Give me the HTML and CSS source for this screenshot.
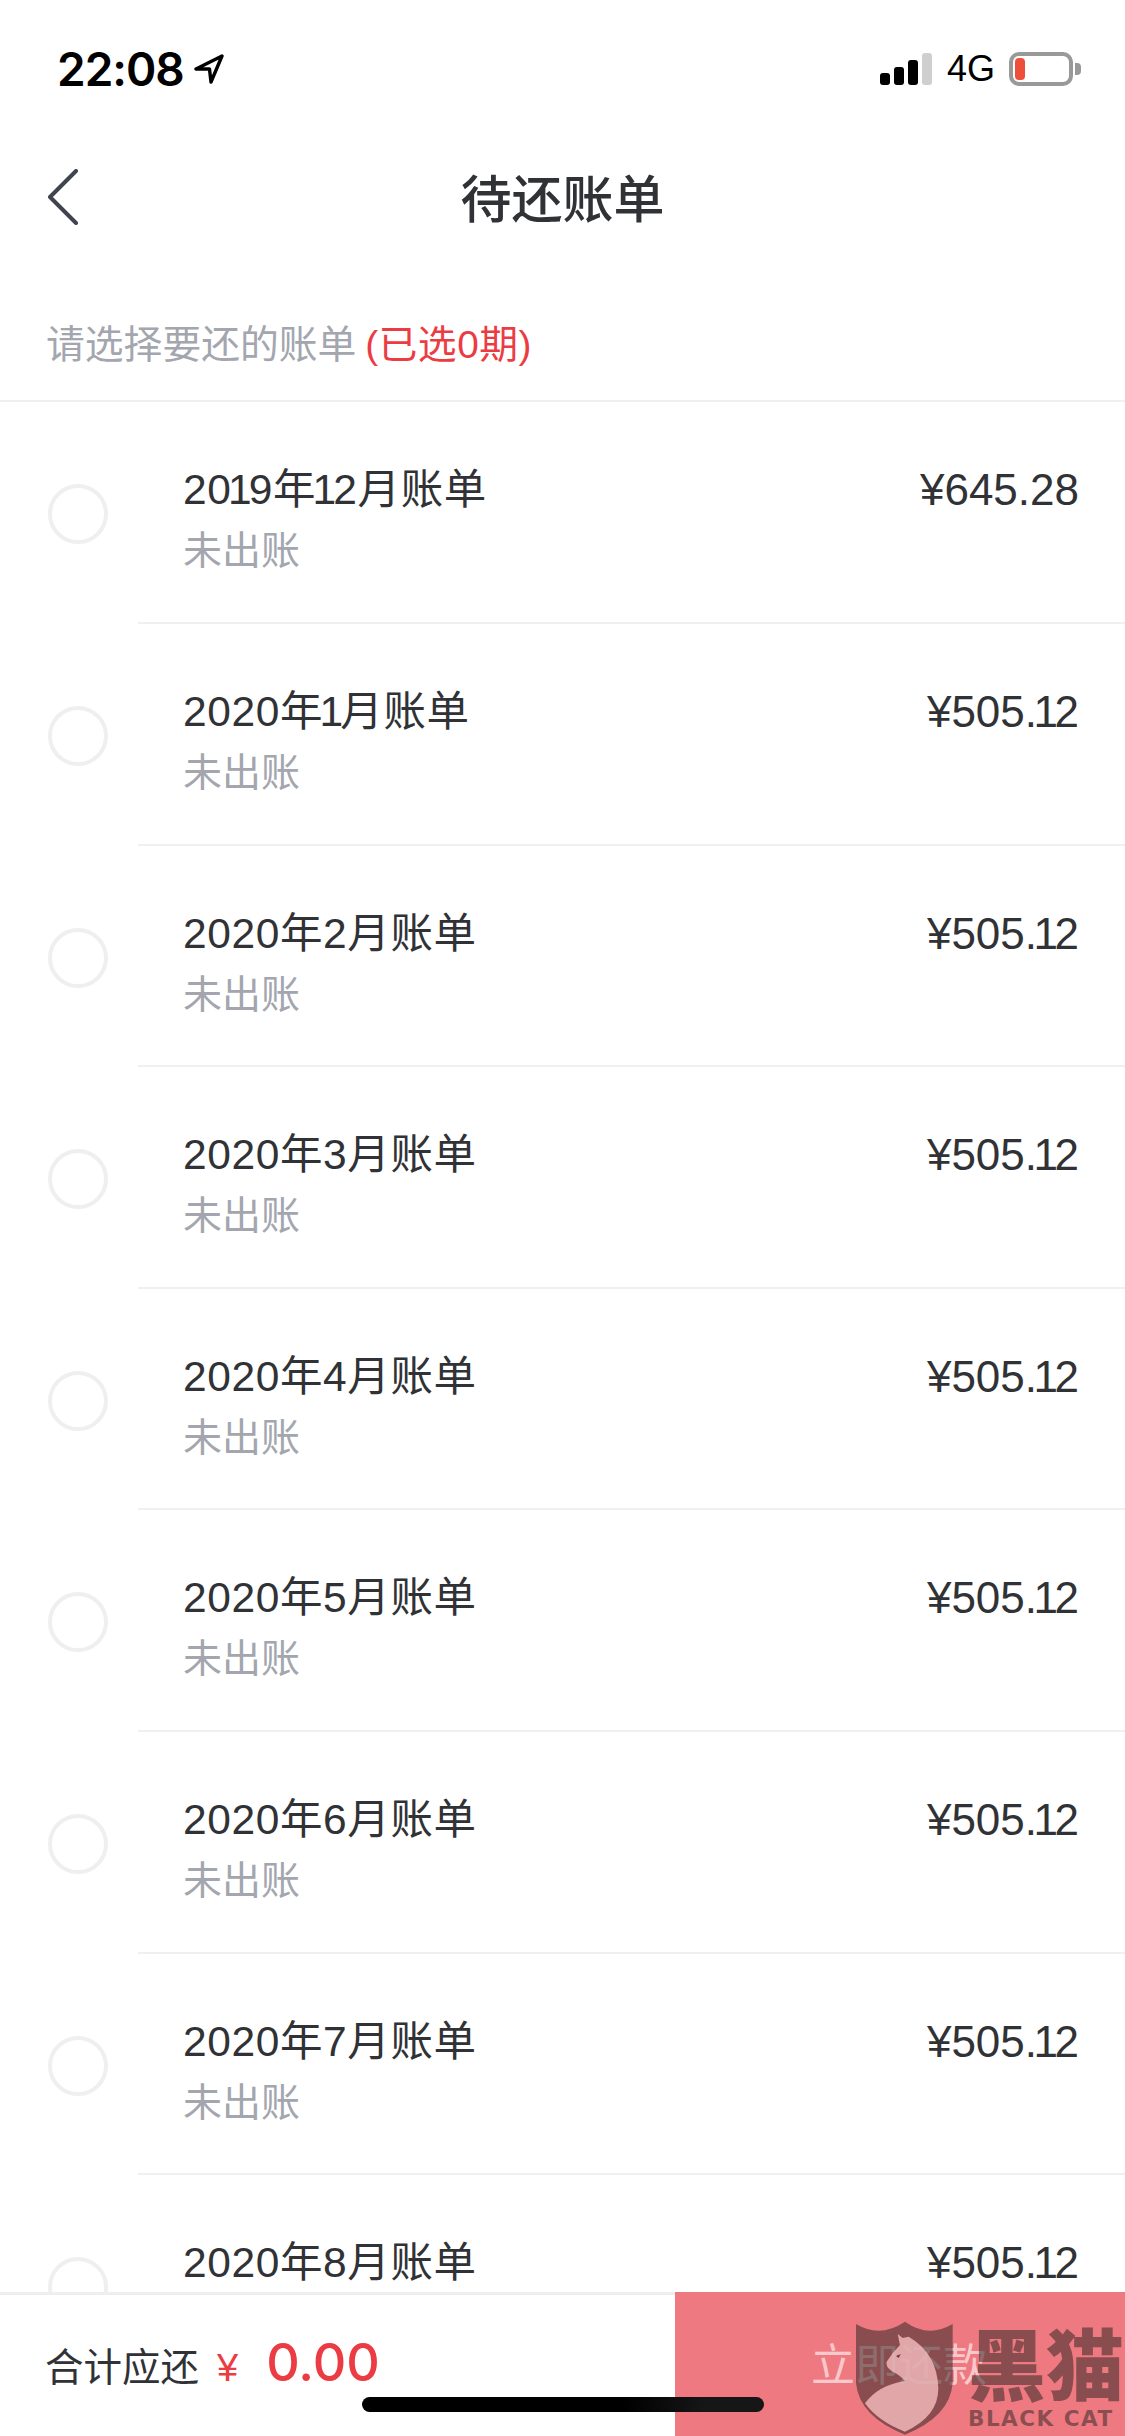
FILE: index.html
```html
<!DOCTYPE html>
<html lang="zh-CN">

<head>
  <meta charset="utf-8">
  <title>待还账单</title>
  <link rel="stylesheet" href="styles.css">
</head>

<body>
  <div class="page">
    <div class="status">
      <div class="status-left">
        <span class="time">22:08</span>
        <svg class="arrow" width="30" height="30" viewBox="0 0 30 30">
          <path d="M28 2 L2 15 L15.5 15 L17 28 Z" fill="none" stroke="#000" stroke-width="3.4" stroke-linejoin="round"/>
        </svg>
      </div>
      <div class="status-right">
        <div class="signal">
          <i class="bar b1"></i><i class="bar b2"></i><i class="bar b3"></i><i class="bar b4"></i>
        </div>
        <span class="net">4G</span>
        <div class="battery"><div class="level"></div></div>
        <div class="tip"></div>
      </div>
    </div>

    <div class="nav">
      <svg class="back" width="32" height="56" viewBox="0 0 32 56">
        <path d="M29 2 L3 28 L29 54" fill="none" stroke="#3f4450" stroke-width="4" stroke-linecap="round" stroke-linejoin="round"/>
      </svg>
      <h1 class="title">待还账单</h1>
      <span></span>
    </div>

    <div class="tips">请选择要还的账单 <span class="red">(已选0期)</span></div>

    <div class="list">
      <div class="row">
        <div class="radio"></div>
        <div class="info"><div class="name">20<span class="one">1</span>9年<span class="one">1</span>2月账单</div><div class="state">未出账</div></div>
        <div class="amount">¥645.28</div>
      </div>
      <div class="row">
        <div class="radio"></div>
        <div class="info"><div class="name">2020年<span class="one">1</span>月账单</div><div class="state">未出账</div></div>
        <div class="amount">¥505.<span class="one">1</span>2</div>
      </div>
      <div class="row">
        <div class="radio"></div>
        <div class="info"><div class="name">2020年2月账单</div><div class="state">未出账</div></div>
        <div class="amount">¥505.<span class="one">1</span>2</div>
      </div>
      <div class="row">
        <div class="radio"></div>
        <div class="info"><div class="name">2020年3月账单</div><div class="state">未出账</div></div>
        <div class="amount">¥505.<span class="one">1</span>2</div>
      </div>
      <div class="row">
        <div class="radio"></div>
        <div class="info"><div class="name">2020年4月账单</div><div class="state">未出账</div></div>
        <div class="amount">¥505.<span class="one">1</span>2</div>
      </div>
      <div class="row">
        <div class="radio"></div>
        <div class="info"><div class="name">2020年5月账单</div><div class="state">未出账</div></div>
        <div class="amount">¥505.<span class="one">1</span>2</div>
      </div>
      <div class="row">
        <div class="radio"></div>
        <div class="info"><div class="name">2020年6月账单</div><div class="state">未出账</div></div>
        <div class="amount">¥505.<span class="one">1</span>2</div>
      </div>
      <div class="row">
        <div class="radio"></div>
        <div class="info"><div class="name">2020年7月账单</div><div class="state">未出账</div></div>
        <div class="amount">¥505.<span class="one">1</span>2</div>
      </div>
      <div class="row">
        <div class="radio"></div>
        <div class="info"><div class="name">2020年8月账单</div></div>
        <div class="amount">¥505.<span class="one">1</span>2</div>
      </div>
    </div>

    <div class="footer">
      <div class="total">
        <span class="total-label">合计应还</span>
        <span class="yen">¥</span>
        <span class="sum">0.00</span>
      </div>
      <div class="pay">立即还款</div>
    </div>

    <div class="mark">
      <svg class="shield" width="110" height="126" viewBox="0 0 330 378">
        <path d="M18 42 Q90 85 165 35 Q235 85 308 42 L308 220 Q300 320 165 374 Q28 320 18 220 Z" fill="#463030" fill-opacity="0.6"/>
        <path d="M143 72 L158 84 L176 80 Q262 130 265 235 Q265 320 165 365 Q85 335 45 280 Q85 225 165 213 Q150 195 128 185 Q105 170 110 155 Q125 130 150 105 Z" fill="#f8bfc1" fill-opacity="0.78"/>
        <path d="M138 138 L152 132 L146 144 Z" fill="#6b3c40"/>
      </svg>
      <div class="mark-text">
        <div class="mark-cn">黑猫</div>
        <div class="mark-en">BLACK CAT</div>
      </div>
    </div>

    <div class="home"></div>
  </div>
</body>

</html>
```

FILE: styles.css
```css
* {
  box-sizing: border-box;
}

html, body {
  margin: 0;
  background: #fff;
}

body {
  font-family: "Liberation Sans", "Noto Sans CJK SC", sans-serif;
  color: #303236;
}

.page {
  position: relative;
  width: 1125px;
  height: 2436px;
  display: flex;
  flex-direction: column;
  overflow: hidden;
}

/* status bar */
.status {
  height: 130px;
  flex: none;
  padding: 8px 44px 0 57px;
  display: flex;
  justify-content: space-between;
  align-items: center;
  color: #000;
}

.status-left, .status-right {
  display: flex;
  align-items: center;
}

.time {
  font-family: Inter, sans-serif;
  font-weight: 600;
  font-size: 46px;
  letter-spacing: -1px;
}

.arrow {
  margin-left: 10px;
}

.signal {
  display: flex;
  align-items: flex-end;
  gap: 4px;
  height: 32px;
}

.bar {
  display: block;
  width: 10px;
  border-radius: 3px;
  background: #000;
}

.b1 { height: 12px; }
.b2 { height: 18px; }
.b3 { height: 25px; }
.b4 { height: 32px; background: #cfcfcf; }

.net {
  margin-left: 15px;
  font-size: 36px;
}

.battery {
  width: 64px;
  height: 34px;
  margin-left: 14px;
  padding: 2px;
  border: 4px solid #999;
  border-radius: 10px;
}

.level {
  width: 10px;
  height: 22px;
  border-radius: 4px;
  background: #ee4f3b;
}

.tip {
  width: 6px;
  height: 12px;
  margin-left: 2px;
  border-radius: 0 4px 4px 0;
  background: #999;
}

/* nav */
.nav {
  height: 134px;
  flex: none;
  display: grid;
  grid-template-columns: 1fr auto 1fr;
  align-items: center;
}

.back {
  margin-left: 47px;
}

.title {
  margin: -2px 0 0;
  font-size: 51px;
  font-weight: 500;
  color: #303236;
}

.tips {
  height: 138px;
  flex: none;
  padding: 58px 0 0 46px;
  font-size: 38.8px;
  line-height: 46px;
  color: #a3a6ae;
  border-bottom: 2px solid #f0f0f0;
}

.red {
  margin-left: -2px;
  color: #ec3c43;
  letter-spacing: 0.5px;
}

/* bills */
.list {
  flex: 1;
  padding-top: 0.4px;
  overflow: hidden;
}

.row {
  position: relative;
  height: 221.6px;
  display: flex;
  align-items: flex-start;
  padding: 0 46px 0 48px;
}

.row::after {
  content: "";
  position: absolute;
  left: 138px;
  right: 0;
  bottom: 0;
  height: 2px;
  background: #f0f0f0;
}

.radio {
  width: 60px;
  height: 60px;
  margin-top: 82px;
  border: 4px solid #eeeff1;
  border-radius: 50%;
  flex: none;
}

.info {
  flex: 1;
  margin-left: 75px;
  padding-top: 60px;
}

.name {
  font-size: 42.5px;
  line-height: 56px;
  letter-spacing: 0.6px;
}

/* the reference's 1 is narrower than its other digits */
.one {
  margin: 0 -3.5px;
}

.state {
  margin-top: 6px;
  font-size: 39px;
  line-height: 54px;
  color: #a3a6ae;
}

.amount {
  padding-top: 60px;
  font-size: 44px;
  line-height: 56px;
}

/* bottom bar */
.footer {
  height: 144px;
  flex: none;
  display: flex;
  border-top: 3px solid #eee;
  background: #fff;
}

.total {
  flex: 1;
  padding: 36px 0 0 45px;
  display: flex;
  align-items: baseline;
}

.total-label {
  font-size: 38.5px;
}

.yen {
  margin-left: 18px;
  font-size: 38px;
  color: #ec3c43;
}

.sum {
  margin-left: 28px;
  font-size: 52px;
  font-weight: 500;
  font-family: Inter, sans-serif;
  color: #ec3c43;
}

.pay {
  width: 450px;
  margin-top: -3px;
  padding: 46px 0 0 136px;
  background: #ee7980;
  font-size: 44px;
  line-height: 56px;
  color: rgba(255, 255, 255, 0.6);
}

/* overlays */
.mark {
  position: absolute;
  left: 850px;
  top: 2310px;
  display: flex;
}

.mark-text {
  margin-left: 8px;
  color: rgba(70, 48, 48, 0.6);
}

.mark-cn {
  margin-top: 6px;
  font-size: 78px;
  line-height: 90px;
  font-weight: 900;
  font-family: "Noto Sans CJK SC", sans-serif;
  white-space: nowrap;
}

.mark-en {
  font-family: "DejaVu Sans", sans-serif;
  font-weight: 700;
  font-size: 21.5px;
  line-height: 26px;
  letter-spacing: 1.5px;
  white-space: nowrap;
}

.home {
  position: absolute;
  left: 362px;
  top: 2397px;
  width: 402px;
  height: 15px;
  border-radius: 8px;
  background: linear-gradient(90deg, #000 65%, #161616 85%);
}
```
